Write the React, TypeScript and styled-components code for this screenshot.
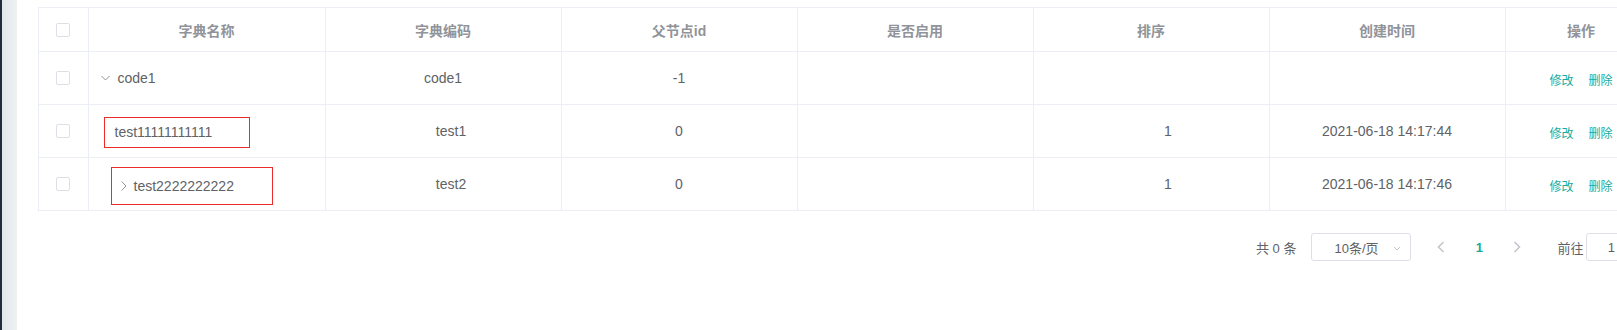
import React from 'react'
import styled, { createGlobalStyle } from 'styled-components'

const GlobalStyle = createGlobalStyle`
    html, body {
        margin: 0;
        padding: 0;
        background: #ffffff;
    }
    body {
        font-family: "Liberation Sans", "Noto Sans CJK SC", sans-serif;
        font-size: 14px;
        color: #606266;
    }
`

const borderColor = '#ebeef5'
const themeColor = '#17ab9d'

const Page = styled.div`
    display: flex;
    height: 330px;
    overflow: hidden;
    background: #ffffff;
`
const SideEdge = styled.div`
    flex: none;
    width: 1.5px;
    background: #1f2d3d;
`
const Gutter = styled.div`
    flex: none;
    width: 15px;
    background: linear-gradient(to right, #e3e7ea, #eef1f4);
`
const Main = styled.div`
    flex: none;
    padding: 7px 0 0 21px;
`
const Table = styled.div`
    display: flex;
    flex-direction: column;
    border-top: 1px solid ${borderColor};
    border-left: 1px solid ${borderColor};
`
const Row = styled.div`
    display: flex;
`
const Cell = styled.div<{ $w: number; $h: number; $align?: 'left' | 'center'; $shift?: number }>`
    box-sizing: border-box;
    flex: none;
    width: ${(p) => p.$w}px;
    height: ${(p) => p.$h}px;
    display: flex;
    align-items: center;
    justify-content: ${(p) => (p.$align === 'left' ? 'flex-start' : 'center')};
    padding: 0 10px 0 ${(p) => 10 + (p.$shift || 0) * 2}px;
    border-right: 1px solid ${borderColor};
    border-bottom: 1px solid ${borderColor};
    white-space: nowrap;
    overflow: hidden;
`
const HeadCell = styled(Cell)`
    color: #909399;
    font-weight: bold;
    font-size: 14px;
`
const Checkbox = styled.span`
    box-sizing: border-box;
    display: inline-block;
    width: 14px;
    height: 14px;
    border: 1px solid #dcdfe6;
    border-radius: 2px;
    background: #ffffff;
`
const ExpandIcon = styled.svg`
    flex: none;
    margin-right: 3px;
`
const Marker = styled.span<{ $left: number; $w: number; $h: number; $top: number }>`
    box-sizing: border-box;
    display: inline-flex;
    align-items: center;
    margin-left: ${(p) => p.$left}px;
    margin-top: ${(p) => p.$top}px;
    width: ${(p) => p.$w}px;
    height: ${(p) => p.$h}px;
    padding-left: ${(p) => (p.$h > 34 ? 9 : 10)}px;
    border: 1px solid #ec2b2b;
`
const Actions = styled.div`
    display: flex;
    gap: 15px;
    padding-top: 2px;
`
const LinkButton = styled.span`
    font-size: 12px;
    color: ${themeColor};
    cursor: pointer;
`

const Pager = styled.div`
    display: flex;
    align-items: center;
    justify-content: flex-end;
    height: 28px;
    margin-top: 22px;
    padding-right: 5px;
    font-size: 13px;
    color: #606266;
`
const Total = styled.span`
    margin-right: 15px;
`
const SizeSelect = styled.div`
    box-sizing: border-box;
    position: relative;
    display: flex;
    align-items: center;
    width: 100px;
    height: 28px;
    padding: 0 25px 0 15px;
    margin-right: 10px;
    border: 1px solid #dcdfe6;
    border-radius: 3px;
    & > span {
        flex: 1;
        text-align: center;
    }
    & > svg {
        position: absolute;
        right: 9px;
        top: 12px;
    }
`
const NavButton = styled.div<{ $w: number }>`
    display: flex;
    align-items: center;
    justify-content: center;
    width: ${(p) => p.$w}px;
    height: 28px;
`
const PageNumber = styled(NavButton)`
    color: ${themeColor};
    font-weight: bold;
`
const Jumper = styled.div`
    display: flex;
    align-items: center;
    gap: 3px;
    margin-left: 20px;
`
const JumpInput = styled.div`
    box-sizing: border-box;
    display: flex;
    align-items: center;
    justify-content: center;
    width: 50px;
    height: 28px;
    border: 1px solid #dcdfe6;
    border-radius: 3px;
`

const widths = [50, 237, 236, 236, 236, 236, 236, 152]
const headers = ['字典名称', '字典编码', '父节点id', '是否启用', '排序', '创建时间', '操作']

const ChevronDown = () => (
    <ExpandIcon width="16" height="10" viewBox="0 0 16 10">
        <path d="M2.5 3 L6.5 7 L10.5 3" fill="none" stroke="#909399" strokeWidth="1" />
    </ExpandIcon>
)
const ChevronRight = () => (
    <ExpandIcon width="10" height="12" viewBox="0 0 10 12">
        <path d="M0.7 1.5 L5 6 L0.7 10.5" fill="none" stroke="#909399" strokeWidth="1" />
    </ExpandIcon>
)

type RowData = {
    name: React.ReactNode
    code: string
    codeShift: number
    parent: string
    enabled: string
    sort: string
    created: string
}

const rows: RowData[] = [
    {
        name: (
            <>
                <ChevronDown />
                code1
            </>
        ),
        code: 'code1',
        codeShift: 0,
        parent: '-1',
        enabled: '',
        sort: '',
        created: '',
    },
    {
        name: (
            <Marker $left={5} $top={2} $w={146} $h={31}>
                test11111111111
            </Marker>
        ),
        code: 'test1',
        codeShift: 8,
        parent: '0',
        enabled: '',
        sort: '1',
        created: '2021-06-18 14:17:44',
    },
    {
        name: (
            <Marker $left={12} $top={3} $w={162} $h={38}>
                <ChevronRight />
                test2222222222
            </Marker>
        ),
        code: 'test2',
        codeShift: 8,
        parent: '0',
        enabled: '',
        sort: '1',
        created: '2021-06-18 14:17:46',
    },
]

export default function App() {
    return (
        <>
            <GlobalStyle />
            <Page>
                <SideEdge />
                <Gutter />
                <Main>
                    <Table>
                        <Row>
                            <HeadCell $w={widths[0]} $h={44}>
                                <Checkbox />
                            </HeadCell>
                            {headers.map((h, i) => (
                                <HeadCell key={h} $w={widths[i + 1]} $h={44}>
                                    {h}
                                </HeadCell>
                            ))}
                        </Row>
                        {rows.map((r, i) => (
                            <Row key={i}>
                                <Cell $w={widths[0]} $h={53}>
                                    <Checkbox />
                                </Cell>
                                <Cell $w={widths[1]} $h={53} $align="left">
                                    {r.name}
                                </Cell>
                                <Cell $w={widths[2]} $h={53} $shift={r.codeShift}>
                                    {r.code}
                                </Cell>
                                <Cell $w={widths[3]} $h={53}>{r.parent}</Cell>
                                <Cell $w={widths[4]} $h={53}>{r.enabled}</Cell>
                                <Cell $w={widths[5]} $h={53} $shift={17}>
                                    {r.sort}
                                </Cell>
                                <Cell $w={widths[6]} $h={53}>{r.created}</Cell>
                                <Cell $w={widths[7]} $h={53}>
                                    <Actions>
                                        <LinkButton>修改</LinkButton>
                                        <LinkButton>删除</LinkButton>
                                    </Actions>
                                </Cell>
                            </Row>
                        ))}
                    </Table>
                    <Pager>
                        <Total>共 0 条</Total>
                        <SizeSelect>
                            <span>10条/页</span>
                            <svg width="8" height="5" viewBox="0 0 8 5">
                                <path d="M1 1 L4 4 L7 1" fill="none" stroke="#c0c4cc" strokeWidth="1" />
                            </svg>
                        </SizeSelect>
                        <NavButton $w={40}>
                            <svg width="8" height="12" viewBox="0 0 8 12">
                                <path d="M6.5 1 L1.5 6 L6.5 11" fill="none" stroke="#c0c4cc" strokeWidth="1.5" />
                            </svg>
                        </NavButton>
                        <PageNumber $w={36}>1</PageNumber>
                        <NavButton $w={40}>
                            <svg width="8" height="12" viewBox="0 0 8 12">
                                <path d="M1.5 1 L6.5 6 L1.5 11" fill="none" stroke="#c0c4cc" strokeWidth="1.5" />
                            </svg>
                        </NavButton>
                        <Jumper>
                            <span>前往</span>
                            <JumpInput>1</JumpInput>
                            <span>页</span>
                        </Jumper>
                    </Pager>
                </Main>
            </Page>
        </>
    )
}
